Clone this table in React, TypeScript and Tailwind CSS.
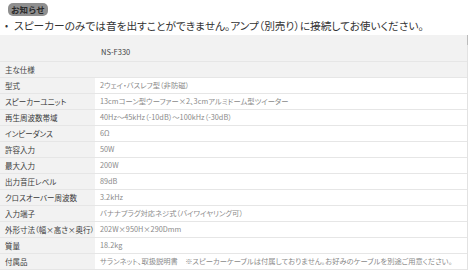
const specs: [string, string][] = [
  ["型式", "2ウェイ・バスレフ型（非防磁）"],
  ["スピーカーユニット", "13cmコーン型ウーファー×2、3cmアルミドーム型ツイーター"],
  ["再生周波数帯域", "40Hz～45kHz（-10dB）～100kHz（-30dB）"],
  ["インピーダンス", "6Ω"],
  ["許容入力", "50W"],
  ["最大入力", "200W"],
  ["出力音圧レベル", "89dB"],
  ["クロスオーバー周波数", "3.2kHz"],
  ["入力端子", "バナナプラグ対応ネジ式（バイワイヤリング可）"],
  ["外形寸法（幅×高さ×奥行）", "202W×950H×290Dmm"],
  ["質量", "18.2kg"],
  [
    "付属品",
    "サランネット、取扱説明書　※スピーカーケーブルは付属しておりません。お好みのケーブルを別途ご用意ください。",
  ],
]

export default function App() {
  return (
    <div className="h-[275px] w-[474px] overflow-hidden bg-white font-['Noto_Sans_CJK_JP',sans-serif] text-[#333]">
      <div className="flex pl-[8px] pt-[3px]">
        <span className="rounded-[5px] bg-[#8f8f8f] px-[3px] text-[8.5px] font-bold leading-[13px] text-[#2a2a2a]">
          お知らせ
        </span>
      </div>
      <p className="mt-[2px] flex h-[16px] items-center pl-[5px] text-[10.7px] leading-[16px] text-[#333] [font-feature-settings:'palt']">
        <span className="mr-[6px] text-[9px]">•</span>
        スピーカーのみでは音を出すことができません。アンプ（別売り）に接続してお使いください。
      </p>

      <div className="relative mt-[1px] w-[468px] border-r border-[#e2e2e2] text-[7.5px] leading-none [font-feature-settings:'palt']">
        <div className="absolute right-[-1px] top-0 h-[10px] w-px bg-[#bbb]" />
        <div className="grid h-[27px] grid-cols-[95px_1fr] border-b border-[#e6e6e6] bg-[#f2f2f2]">
          <div />
          <div className="flex items-center pl-[6px] pt-[8px] text-[#444]">NS-F330</div>
        </div>
        <div className="flex h-[16px] items-center border-b border-[#e6e6e6] bg-[#f2f2f2] pl-[5px] text-[#444]">
          主な仕様
        </div>
        {specs.map(([label, value]) => (
          <div key={label} className="grid h-[16px] grid-cols-[95px_1fr] border-b border-[#e6e6e6]">
            <div className="flex items-center whitespace-nowrap bg-[#f2f2f2] pl-[5px] text-[#3a3a3a]">{label}</div>
            <div className="flex items-center whitespace-nowrap pl-[5px] text-[7.3px] text-[#8a8a8a]">{value}</div>
          </div>
        ))}
      </div>
    </div>
  )
}
